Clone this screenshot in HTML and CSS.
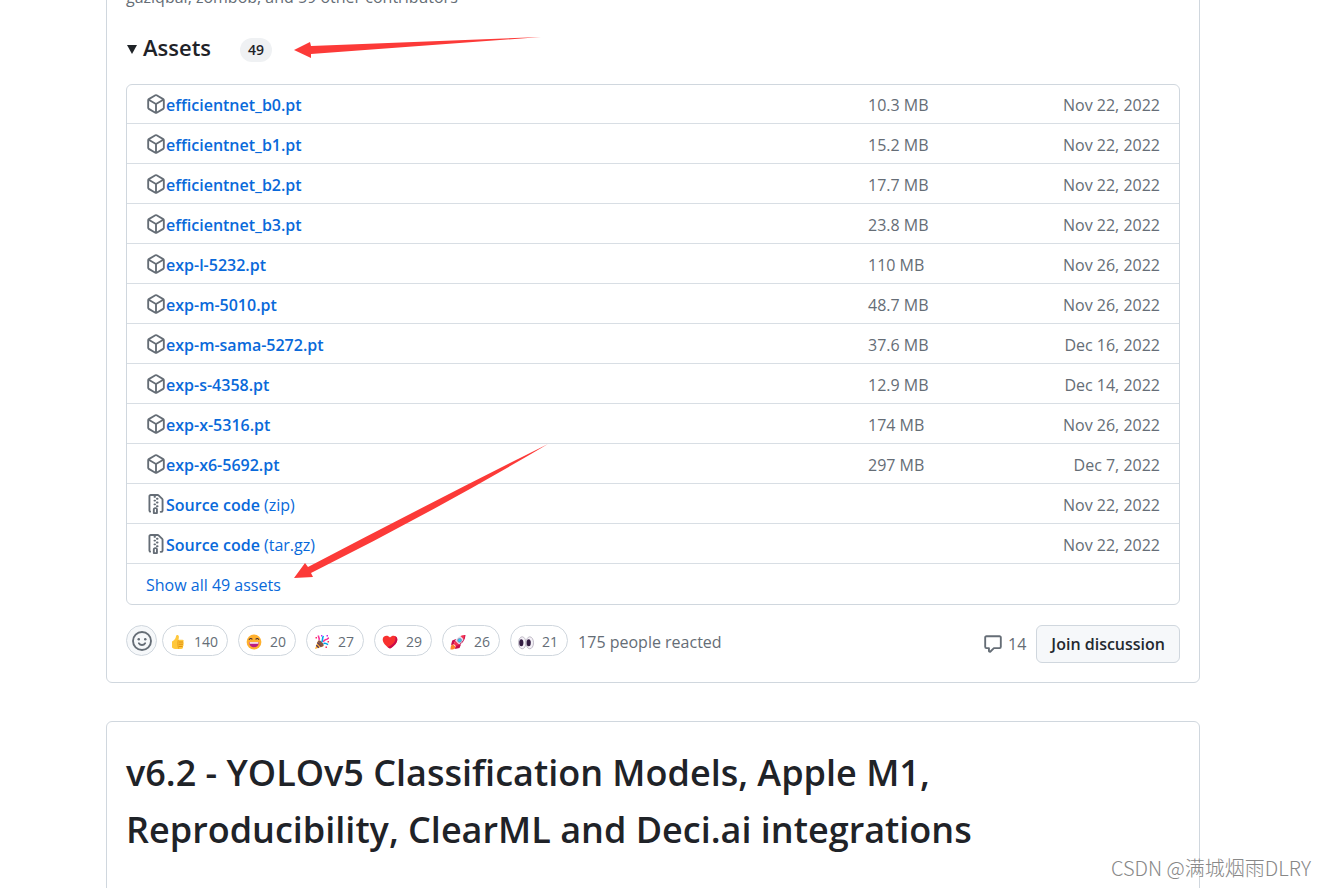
FILE: index.html
```html
<!DOCTYPE html>
<html lang="en">
<head>
    <meta charset="UTF-8">
    <meta name="viewport" content="width=device-width, initial-scale=1.0">
    <title>Releases - YOLOv5</title>
    <link rel="stylesheet" href="styles.css">
</head>
<body>

    <!-- Shared icons -->
    <svg class="icon-defs" aria-hidden="true">
        <symbol id="package" viewBox="0 0 16 16"><path d="m8.878.392 5.25 3.045c.54.314.872.89.872 1.514v6.098a1.75 1.75 0 0 1-.872 1.514l-5.25 3.045a1.75 1.75 0 0 1-1.756 0l-5.25-3.045A1.75 1.75 0 0 1 1 11.049V4.951c0-.624.332-1.201.872-1.514L7.122.392a1.75 1.75 0 0 1 1.756 0ZM7.875 1.69l-4.63 2.685L8 7.133l4.755-2.758-4.63-2.685a.248.248 0 0 0-.25 0ZM2.5 5.677v5.372c0 .09.047.171.125.216l4.625 2.683V8.432Zm6.25 8.271 4.625-2.683a.25.25 0 0 0 .125-.216V5.677L8.75 8.432Z"/></symbol>
        <symbol id="zip" viewBox="0 0 16 16"><path d="M3.5 1.75v11.5c0 .09.048.173.126.217a.75.75 0 0 1-.752 1.298A1.748 1.748 0 0 1 2 13.25V1.75C2 .784 2.784 0 3.75 0h5.586c.464 0 .909.185 1.237.513l2.914 2.914c.329.328.513.773.513 1.237v8.586A1.75 1.75 0 0 1 12.25 15h-.5a.75.75 0 0 1 0-1.5h.5a.25.25 0 0 0 .25-.25V4.664a.25.25 0 0 0-.073-.177L9.513 1.573a.25.25 0 0 0-.177-.073H7.25a.75.75 0 0 1 0 1.5h-.5a.75.75 0 0 1 0-1.5h-3a.25.25 0 0 0-.25.25Zm3.75 8.75h.5c.966 0 1.75.784 1.75 1.75v3a.75.75 0 0 1-.75.75h-2.5a.75.75 0 0 1-.75-.75v-3c0-.966.784-1.75 1.75-1.75ZM6 5.25a.75.75 0 0 1 .75-.75h.5a.75.75 0 0 1 0 1.5h-.5A.75.75 0 0 1 6 5.25Zm.75 2.25h.5a.75.75 0 0 1 0 1.5h-.5a.75.75 0 0 1 0-1.5ZM8 6.75A.75.75 0 0 1 8.75 6h.5a.75.75 0 0 1 0 1.5h-.5A.75.75 0 0 1 8 6.75ZM8.75 3h.5a.75.75 0 0 1 0 1.5h-.5a.75.75 0 0 1 0-1.5ZM8 9.75A.75.75 0 0 1 8.75 9h.5a.75.75 0 0 1 0 1.5h-.5A.75.75 0 0 1 8 9.75Zm-1 2.5v2.25h1v-2.25a.25.25 0 0 0-.25-.25h-.5a.25.25 0 0 0-.25.25Z"/></symbol>
    </svg>

    <main class="releases">
        <section class="card">
            <p class="contributors">gaziqbal, zombob, and 59 other contributors</p>

            <details open>
                <summary>
                    <span class="assets-title">Assets</span>
                    <span class="counter">49</span>
                </summary>

                <div class="assets">
                    <table>
                        <tbody>
                            <tr>
                                <td class="name"><svg class="icon"><use href="#package"/></svg><a href="#">efficientnet_b0.pt</a></td>
                                <td class="size">10.3 MB</td>
                                <td class="date">Nov 22, 2022</td>
                            </tr>
                            <tr>
                                <td class="name"><svg class="icon"><use href="#package"/></svg><a href="#">efficientnet_b1.pt</a></td>
                                <td class="size">15.2 MB</td>
                                <td class="date">Nov 22, 2022</td>
                            </tr>
                            <tr>
                                <td class="name"><svg class="icon"><use href="#package"/></svg><a href="#">efficientnet_b2.pt</a></td>
                                <td class="size">17.7 MB</td>
                                <td class="date">Nov 22, 2022</td>
                            </tr>
                            <tr>
                                <td class="name"><svg class="icon"><use href="#package"/></svg><a href="#">efficientnet_b3.pt</a></td>
                                <td class="size">23.8 MB</td>
                                <td class="date">Nov 22, 2022</td>
                            </tr>
                            <tr>
                                <td class="name"><svg class="icon"><use href="#package"/></svg><a href="#">exp-l-5232.pt</a></td>
                                <td class="size">110 MB</td>
                                <td class="date">Nov 26, 2022</td>
                            </tr>
                            <tr>
                                <td class="name"><svg class="icon"><use href="#package"/></svg><a href="#">exp-m-5010.pt</a></td>
                                <td class="size">48.7 MB</td>
                                <td class="date">Nov 26, 2022</td>
                            </tr>
                            <tr>
                                <td class="name"><svg class="icon"><use href="#package"/></svg><a href="#">exp-m-sama-5272.pt</a></td>
                                <td class="size">37.6 MB</td>
                                <td class="date">Dec 16, 2022</td>
                            </tr>
                            <tr>
                                <td class="name"><svg class="icon"><use href="#package"/></svg><a href="#">exp-s-4358.pt</a></td>
                                <td class="size">12.9 MB</td>
                                <td class="date">Dec 14, 2022</td>
                            </tr>
                            <tr>
                                <td class="name"><svg class="icon"><use href="#package"/></svg><a href="#">exp-x-5316.pt</a></td>
                                <td class="size">174 MB</td>
                                <td class="date">Nov 26, 2022</td>
                            </tr>
                            <tr>
                                <td class="name"><svg class="icon"><use href="#package"/></svg><a href="#">exp-x6-5692.pt</a></td>
                                <td class="size">297 MB</td>
                                <td class="date">Dec 7, 2022</td>
                            </tr>
                            <tr>
                                <td class="name"><svg class="icon"><use href="#zip"/></svg><a href="#">Source code <span>(zip)</span></a></td>
                                <td class="size"></td>
                                <td class="date">Nov 22, 2022</td>
                            </tr>
                            <tr>
                                <td class="name"><svg class="icon"><use href="#zip"/></svg><a href="#">Source code <span>(tar.gz)</span></a></td>
                                <td class="size"></td>
                                <td class="date">Nov 22, 2022</td>
                            </tr>
                        </tbody>
                    </table>
                    <div class="show-all"><a href="#">Show all 49 assets</a></div>
                </div>
            </details>

            <div class="card-footer">
                <div class="reactions">
                    <button type="button" class="add-reaction" aria-label="Add reaction">
                        <svg viewBox="0 0 16 16" width="20" height="20" fill="none" stroke="#656d76" stroke-width="1.5" stroke-linecap="round">
                            <circle cx="8" cy="8" r="7.2"/>
                            <path d="M5.5 9.8c1.2 1.9 3.8 1.9 5 0"/>
                            <circle cx="5.4" cy="6.6" r="1" fill="#656d76" stroke="none"/>
                            <circle cx="10.6" cy="6.6" r="1" fill="#656d76" stroke="none"/>
                        </svg>
                    </button>
                    <button type="button" class="reaction" aria-label="Thumbs up 140">
                        <svg viewBox="0 0 16 16" class="emoji">
                            <path d="M2 7.4C4.500 6.400 5.600 4.600 6 2.200 6.300.4 8.700.4 8.900 2.600c.1 1.200-.2 2.200-.5 3.200h4c1.400 0 1.700 1.500.9 2.100.8.600.7 1.800 0 2.200.6.700.4 1.700-.3 2.100.4 1.500-.3 2.800-1.900 2.800H6.500c-1.900 0-3.200-.7-4.500-1.600z" fill="#ffc83d"/>
                            <path d="M8.600 8h4.400M8.600 10.200h4.400M8.600 12.400h4" stroke="#d67d00" stroke-width=".8"/>
                            <path d="M8.400 6c-1 1.300-.8 6.400.4 8.800" fill="none" stroke="#e79b16" stroke-width=".7"/>
                        </svg>
                        140
                    </button>
                    <button type="button" class="reaction" aria-label="Laugh 20">
                        <svg viewBox="0 0 16 16" class="emoji">
                            <circle cx="8" cy="8" r="7.400" fill="#ffb02e"/>
                            <path d="M3 5.800q1.500-2.400 3.400-.4M9.600 5.400q1.900-2 3.400.4" fill="none" stroke="#402a32" stroke-width="1.100"/>
                            <path d="M3.200 8.200h9.600c0 3-2 5-4.800 5s-4.800-2-4.800-5z" fill="#bb1d80"/>
                            <path d="M3.700 8.200h8.600v1.500H3.700z" fill="#fff"/>
                        </svg>
                        20
                    </button>
                    <button type="button" class="reaction" aria-label="Hooray 27">
                        <svg viewBox="0 0 16 16" class="emoji">
                            <path d="M1 15 4 6.500l5.500 5.700z" fill="#ffb02e"/>
                            <path d="m2.300 11.300 2.500 2.500M3.300 8.500l4.200 4.200" stroke="#533566" stroke-width="1.300"/>
                            <ellipse cx="6.800" cy="9.300" rx="1.700" ry="3.700" fill="#8c5543" transform="rotate(-42 6.800 9.300)"/>
                            <path d="M7.500 8c2-1.500 0-3.500 2-6M9.500 9.700c1.500-1.200 3-.2 4.500 1" fill="none" stroke="#00a6ed" stroke-width="1.600"/>
                            <path d="M9 7.500c1.500-.2 1.300-1.800 3-2s1.500-1.300 3-1.500M5 6C6 4 4 3.500 4.500 1.500" fill="none" stroke="#f92f9a" stroke-width="1.600"/>
                            <path d="M1.500 3H3v1.500H1.500zM13.500 7H15v1.500h-1.500zM11.500 12.500H13V14h-1.500z" fill="#f92f60"/>
                            <path d="M7 1h1.300v1.500H7zM12.500 1H14v1.500h-1.500z" fill="#c02af0"/>
                        </svg>
                        27
                    </button>
                    <button type="button" class="reaction" aria-label="Heart 29">
                        <svg viewBox="0 0 16 16" class="emoji">
                            <path d="M8 14.600C4 12 .7 9 .7 5.400.7 1.600 5.600.400 8 3.600c2.400-3.200 7.300-2 7.300 1.800C15.300 9 12 12 8 14.600z" fill="#f8312f"/>
                            <path d="M8 14.600C12 12 15.300 9 15.300 5.400c0-1.600-.9-2.700-2.100-3.200 1.500 4.800-2.200 8.800-7.700 10.800z" fill="#ca0b4a"/>
                        </svg>
                        29
                    </button>
                    <button type="button" class="reaction" aria-label="Rocket 26">
                        <svg viewBox="0 0 16 16" class="emoji">
                            <path d="M.5 15.500c0-2.500.6-4.800 2.200-5.500L6 13.200C5.300 14.900 3.500 15.500.5 15.500z" fill="#ff822d"/>
                            <path d="M6 5 2.200 6.500 1 11l3.800-1zM11 10.500 9.500 14 5 15l1-3.800z" fill="#ca0b4a"/>
                            <path d="M3.800 10C5.400 5 9 1.500 15 1c-.5 6-4 9.600-9 11.200z" fill="#e1d8ec"/>
                            <path d="M10.500 2c1.500-.6 3-.9 4.500-1-.1 1.600-.4 3-1 4.500zM3.800 10l1.400-3.200L9.200 10.800 6 12.200z" fill="#f8314f"/>
                            <path d="M6 12.200C11 10.600 14.500 7 15 1" fill="none" stroke="#ca0b4a"/>
                            <circle cx="9.600" cy="6.400" r="1.900" fill="#26c9fc" stroke="#7d8ba0" stroke-width=".8"/>
                        </svg>
                        26
                    </button>
                    <button type="button" class="reaction" aria-label="Eyes 21">
                        <svg viewBox="0 0 16 16" class="emoji">
                            <ellipse cx="4.200" cy="8.800" rx="3.700" ry="6" fill="#f4f1f7" stroke="#b9b3c0" stroke-width=".9"/>
                            <ellipse cx="11.800" cy="8.800" rx="3.700" ry="6" fill="#f4f1f7" stroke="#b9b3c0" stroke-width=".9"/>
                            <ellipse cx="3.300" cy="8.800" rx="2.100" ry="3.500" fill="#321b41"/>
                            <ellipse cx="10.700" cy="8.800" rx="2.100" ry="3.500" fill="#321b41"/>
                        </svg>
                        21
                    </button>
                    <span class="reacted">175 people reacted</span>
                </div>

                <div class="discussion">
                    <a href="#" class="comments">
                        <svg viewBox="0 0 16 16" class="icon"><path d="M1 2.750C1 1.784 1.784 1 2.750 1h10.500c.966 0 1.750.784 1.750 1.750v7.500A1.750 1.750 0 0 1 13.250 12H9.060l-2.573 2.573A1.458 1.458 0 0 1 4 13.543V12H2.750A1.750 1.750 0 0 1 1 10.250Zm1.750-.25a.25.25 0 0 0-.25.25v7.500c0 .138.112.25.25.25h2a.75.75 0 0 1 .75.75v2.190l2.720-2.720a.749.749 0 0 1 .53-.22h4.500a.25.25 0 0 0 .25-.25v-7.500a.25.25 0 0 0-.25-.25Z"/></svg>
                        14
                    </a>
                    <a href="#" class="btn">Join discussion</a>
                </div>
            </div>
        </section>

        <section class="card">
            <h1>v6.2 - YOLOv5 Classification Models, Apple M1, Reproducibility, ClearML and Deci.ai integrations</h1>
        </section>
    </main>

    <!-- Red pointer arrows -->
    <svg class="arrows" width="560" height="600" aria-hidden="true">
        <path d="M294 50 310 42 311 46 541 37 311 54 311 58z"/>
        <path d="M294 578 305 563 308 567 Q430 503 548 444 Q435 511 311 573L313 577z"/>
    </svg>

    <div class="watermark">CSDN @满城烟雨DLRY</div>

</body>
</html>
```

FILE: styles.css
```css
* {
    box-sizing: border-box;
}

body {
    margin: 0;
    font-family: 'Open Sans', 'Noto Sans', sans-serif;
    font-size: 16px;
    line-height: 26px;
    color: #1f2328;
    background-color: white;
    position: relative;
    height: 100vh;
    overflow: hidden;
}

a {
    color: #0969da;
    text-decoration: none;
}

a:hover {
    text-decoration: underline;
}

.icon-defs {
    position: absolute;
    width: 0;
    height: 0;
}

.icon {
    width: 20px;
    height: 20px;
    fill: #656d76;
    flex-shrink: 0;
}

.releases {
    margin: -40px 127px 0 106px;
}

.card {
    border: 1px solid #d0d7de;
    border-radius: 6px;
    padding: 19px;
    margin-bottom: 38px;
    min-height: 200px;
}

.contributors {
    margin: 4px 0 22px;
    color: #656d76;
}

summary {
    display: flex;
    align-items: center;
    height: 30px;
    margin-bottom: 22px;
    cursor: pointer;
    list-style: none;
}

summary::before {
    content: '';
    border: 5px solid transparent;
    border-top: 9px solid #1f2328;
    border-bottom: 0;
    margin: 4px 6px 0 1px;
}

.assets-title {
    font-size: 22px;
    font-weight: 600;
}

.counter {
    margin-top: 6px;
    margin-left: 29px;
    padding: 0 8px;
    border-radius: 12px;
    background-color: #eff1f3;
    font-size: 14px;
    font-weight: 600;
    line-height: 24px;
}

/* Assets list */
.assets {
    border: 1px solid #d0d7de;
    border-radius: 6px;
}

table {
    width: 100%;
    table-layout: fixed;
    border-spacing: 0;
}

td {
    height: 40px;
    padding: 2px 0 0;
    border-top: 1px solid #d8dee4;
    color: #656d76;
}

tr:first-child td {
    height: 38px;
    border-top: 0;
}

.name svg {
    display: inline-block;
    vertical-align: -3px;
}

.name {
    padding-left: 19px;
}

.name a {
    font-weight: 600;
}

.name span {
    font-weight: 400;
}

.size {
    width: 112px;
}

.date {
    width: 199px;
    padding-right: 19px;
    text-align: right;
}

.show-all {
    border-top: 1px solid #d8dee4;
    padding: 8px 19px 6px;
}

/* Reactions and discussion */
.card-footer {
    display: flex;
    justify-content: space-between;
    margin-top: 20px;
}

.reactions {
    display: flex;
    align-items: center;
    gap: 10px;
    height: 31px;
    color: #656d76;
}

.reactions button {
    display: flex;
    align-items: center;
    height: 31px;
    border: 1px solid #d0d7de;
    border-radius: 16px;
    background-color: white;
    color: #656d76;
    font-family: inherit;
    font-size: 14px;
    cursor: pointer;
}

.reactions .add-reaction {
    justify-content: center;
    width: 31px;
    padding: 0;
    margin-right: -5px;
    background-color: #f6f8fa;
    flex-shrink: 0;
}

.reactions .reaction {
    gap: 8px;
    padding: 2px 9px 0 7px;
}

.emoji {
    width: 16px;
    height: 16px;
}

.reacted {
    padding-top: 2px;
}

.discussion {
    display: flex;
    align-items: center;
    gap: 10px;
}

.comments {
    display: flex;
    align-items: center;
    gap: 5px;
    color: #656d76;
}

.btn {
    padding: 5px 14px;
    border: 1px solid #d0d7de;
    border-radius: 6px;
    background-color: #f6f8fa;
    color: #24292f;
    font-weight: 600;
}

h1 {
    margin: 3px 0;
    font-size: 36px;
    font-weight: 600;
    line-height: 57px;
}

.arrows {
    position: absolute;
    top: 0;
    left: 0;
    fill: #fc3a38;
    pointer-events: none;
}

.watermark {
    position: absolute;
    right: 16px;
    bottom: 7px;
    font-family: 'Noto Sans CJK SC', sans-serif;
    font-size: 20px;
    font-weight: 300;
    color: #888;
    text-shadow: -1px -1px white;
}
```
